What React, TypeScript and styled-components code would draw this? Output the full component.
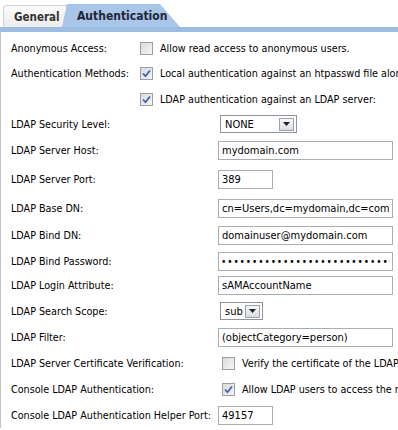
import React from "react";
import styled, { createGlobalStyle } from "styled-components";

const Global = createGlobalStyle`
  html, body { margin: 0; padding: 0; background: #ffffff; }
  body { font-family: "DejaVu Sans Condensed", "Liberation Sans", Arial, sans-serif; font-size: 10.7px; color: #000; }
`;

const Page = styled.div`
  width: 398px;
  height: 430px;
  overflow: hidden;
  background: #fff;
`;

const TabBar = styled.div`
  display: flex;
  align-items: flex-end;
  height: 27px;
  padding-left: 3px;
`;

const GeneralTab = styled.div`
  height: 22px;
  width: 64px;
  box-sizing: border-box;
  padding-left: 10px;
  display: flex;
  align-items: center;
  font-weight: bold;
  font-size: 11.5px;
  color: #333;
  background: linear-gradient(#fbfbfb, #ececec);
  border: 1px solid #d0d0d0;
  border-bottom: none;
  border-top-left-radius: 4px;
`;

const AuthTab = styled.div`
  height: 23px;
  width: 118px;
  margin-left: -5px;
  box-sizing: border-box;
  padding-left: 15px;
  display: flex;
  align-items: center;
  font-weight: bold;
  font-size: 12px;
  color: #1c2838;
  background: #a9c5e8;
  clip-path: polygon(5px 0, 98px 0, 118px 100%, 0 100%);
`;

const Bar = styled.div`
  height: 5px;
  background: #9dbce2;
`;

const Form = styled.div`
  border-left: 1px solid #c4c4c4;
  padding-top: 3px;
  padding-left: 10px;
`;

const Row = styled.div<{ $h: number }>`
  display: flex;
  align-items: center;
  height: ${(p) => p.$h}px;
`;

const Label = styled.div<{ $w: number }>`
  width: ${(p) => p.$w}px;
  flex: none;
  white-space: nowrap;
`;

const CheckText = styled.div`
  display: flex;
  align-items: center;
  gap: 7px;
  white-space: nowrap;
`;

const Box = styled.span<{ $inset?: number }>`
  width: 13px;
  height: 13px;
  box-sizing: border-box;
  flex: none;
  margin-left: ${(p) => p.$inset ?? 0}px;
  border: 1px solid #9a9fa6;
  background: linear-gradient(135deg, #d8dade, #f6f6f6);
  display: flex;
  align-items: center;
  justify-content: center;
`;

const TextInput = styled.input<{ $w: number }>`
  width: ${(p) => p.$w}px;
  height: 19px;
  box-sizing: border-box;
  border: 1px solid #a7aeb6;
  padding: 0 3px;
  margin: 0;
  font: inherit;
  font-size: 11px;
  color: #000;
  background: #fff;
  outline: none;
`;

const PassInput = styled(TextInput)`
  letter-spacing: 0.9px;
  padding: 0 2px;
  font-size: 10px;
`;

const Select = styled.div<{ $w: number }>`
  width: ${(p) => p.$w}px;
  height: 18px;
  margin-left: 2px;
  box-sizing: border-box;
  border: 1px solid #8f9499;
  display: flex;
  align-items: center;
  justify-content: space-between;
  padding: 0 2px 0 4px;
  background: #fff;
  font-size: 11px;
`;

const Arrow = styled.span`
  width: 15px;
  height: 13px;
  box-sizing: border-box;
  border: 1px solid #9aa3ad;
  background: linear-gradient(#f7f7f7, #d9dde2);
  display: flex;
  align-items: center;
  justify-content: center;
`;

const Check = ({ on, inset }: { on?: boolean; inset?: number }) => (
  <Box $inset={inset}>
    {on && (
      <svg width="9" height="9" viewBox="0 0 9 9">
        <path d="M1 4.5 L3.5 7.2 L8 1.5" fill="none" stroke="#3d62a8" strokeWidth="1.8" />
      </svg>
    )}
  </Box>
);

const Dropdown = ({ value, w }: { value: string; w: number }) => (
  <Select $w={w}>
    <span>{value}</span>
    <Arrow>
      <svg width="7" height="4" viewBox="0 0 7 4">
        <path d="M0 0 H7 L3.5 4 Z" fill="#222" />
      </svg>
    </Arrow>
  </Select>
);

const W1 = 129;
const W2 = 207;

export default function App() {
  return (
    <Page>
      <Global />
      <TabBar>
        <GeneralTab>General</GeneralTab>
        <AuthTab>Authentication</AuthTab>
      </TabBar>
      <Bar />
      <Form>
        <Row $h={26}>
          <Label $w={W1}>Anonymous Access:</Label>
          <CheckText>
            <Check />
            Allow read access to anonymous users.
          </CheckText>
        </Row>
        <Row $h={25}>
          <Label $w={W1}>Authentication Methods:</Label>
          <CheckText>
            <Check on />
            Local authentication against an htpasswd file alone
          </CheckText>
        </Row>
        <Row $h={26}>
          <Label $w={W1}></Label>
          <CheckText>
            <Check on />
            LDAP authentication against an LDAP server:
          </CheckText>
        </Row>
        <Row $h={24}>
          <Label $w={W2}>LDAP Security Level:</Label>
          <Dropdown value="NONE" w={77} />
        </Row>
        <Row $h={28}>
          <Label $w={W2}>LDAP Server Host:</Label>
          <TextInput $w={175} readOnly defaultValue="mydomain.com" />
        </Row>
        <Row $h={30}>
          <Label $w={W2}>LDAP Server Port:</Label>
          <TextInput $w={55} readOnly defaultValue="389" />
        </Row>
        <Row $h={28}>
          <Label $w={W2}>LDAP Base DN:</Label>
          <TextInput $w={175} readOnly defaultValue="cn=Users,dc=mydomain,dc=com" />
        </Row>
        <Row $h={27}>
          <Label $w={W2}>LDAP Bind DN:</Label>
          <TextInput $w={175} readOnly defaultValue="domainuser@mydomain.com" />
        </Row>
        <Row $h={24}>
          <Label $w={W2}>LDAP Bind Password:</Label>
          <PassInput $w={175} type="password" readOnly defaultValue="aaaaaaaaaaaaaaaaaaaaaaaaaaaaaaaaaaaaaaa" />
        </Row>
        <Row $h={25}>
          <Label $w={W2}>LDAP Login Attribute:</Label>
          <TextInput $w={175} readOnly defaultValue="sAMAccountName" />
        </Row>
        <Row $h={26}>
          <Label $w={W2}>LDAP Search Scope:</Label>
          <Dropdown value="sub" w={43} />
        </Row>
        <Row $h={27}>
          <Label $w={W2}>LDAP Filter:</Label>
          <TextInput $w={175} readOnly defaultValue="(objectCategory=person)" />
        </Row>
        <Row $h={25}>
          <Label $w={W2}>LDAP Server Certificate Verification:</Label>
          <CheckText>
            <Check inset={4} />
            Verify the certificate of the LDAP server
          </CheckText>
        </Row>
        <Row $h={26}>
          <Label $w={W2}>Console LDAP Authentication:</Label>
          <CheckText>
            <Check on inset={4} />
            Allow LDAP users to access the management console
          </CheckText>
        </Row>
        <Row $h={26}>
          <Label $w={W2}>Console LDAP Authentication Helper Port:</Label>
          <TextInput $w={55} readOnly defaultValue="49157" />
        </Row>
      </Form>
    </Page>
  );
}
